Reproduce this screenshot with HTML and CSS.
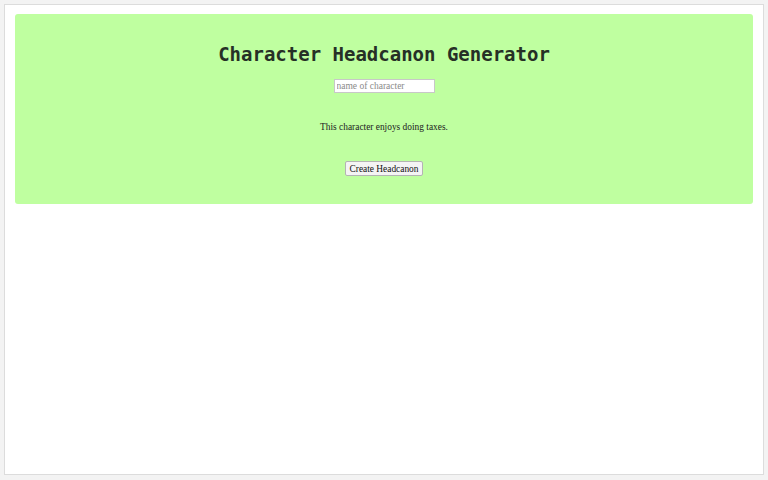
FILE: index.html
```html
<!DOCTYPE html>
<html lang="en">
<head>
    <meta charset="UTF-8">
    <title>Character Headcanon Generator</title>
    <link rel="stylesheet" href="styles.css">
</head>
<body>
    <div class="page">
        <section class="generator">
            <h1 class="title">Character Headcanon Generator</h1>
            <input class="name-input" type="text" placeholder="name of character">
            <p class="result">This character enjoys doing taxes.</p>
            <button class="create-btn">Create Headcanon</button>
        </section>
    </div>
</body>
</html>
```

FILE: styles.css
```css
html, body {
    margin: 0;
    height: 100%;
}

body {
    background: #f3f3f3;
    padding: 4px 4px 5px 4px;
    box-sizing: border-box;
    font-family: 'Liberation Serif', serif;
}

/* White frame around everything */
.page {
    background: #fff;
    border: 1px solid #dcdcdc;
    height: 100%;
    box-sizing: border-box;
    padding: 9px 10px;
}

.generator {
    background: #bfffa0;
    border-radius: 3px;
    height: 190px;
    box-sizing: border-box;
    padding-top: 29px;
    text-align: center;
}

.title {
    font-family: 'DejaVu Sans Mono', monospace;
    font-size: 19px;
    font-weight: bold;
    color: #263026;
    margin: 0 0 14px 0;
    line-height: 22px;
}

.name-input {
    display: block;
    margin: 0 auto;
    width: 101px;
    height: 14px;
    box-sizing: border-box;
    border: 1px solid #c8c8c8;
    padding: 0 2px;
    font-family: 'Liberation Serif', serif;
    font-size: 9.5px;
    background: #fff;
}

.name-input::placeholder {
    color: #8a8a8a;
}

.result {
    font-size: 9.4px;
    color: #222;
    margin: 28px 0 0 0;
    line-height: 12px;
}

.create-btn {
    margin-top: 28px;
    font-family: 'Liberation Serif', serif;
    font-size: 9.4px;
    height: 15px;
    padding: 0 4px;
    background: #f4f4f4;
    border: 1px solid #b4b4b4;
    border-radius: 2px;
    color: #111;
}
```
